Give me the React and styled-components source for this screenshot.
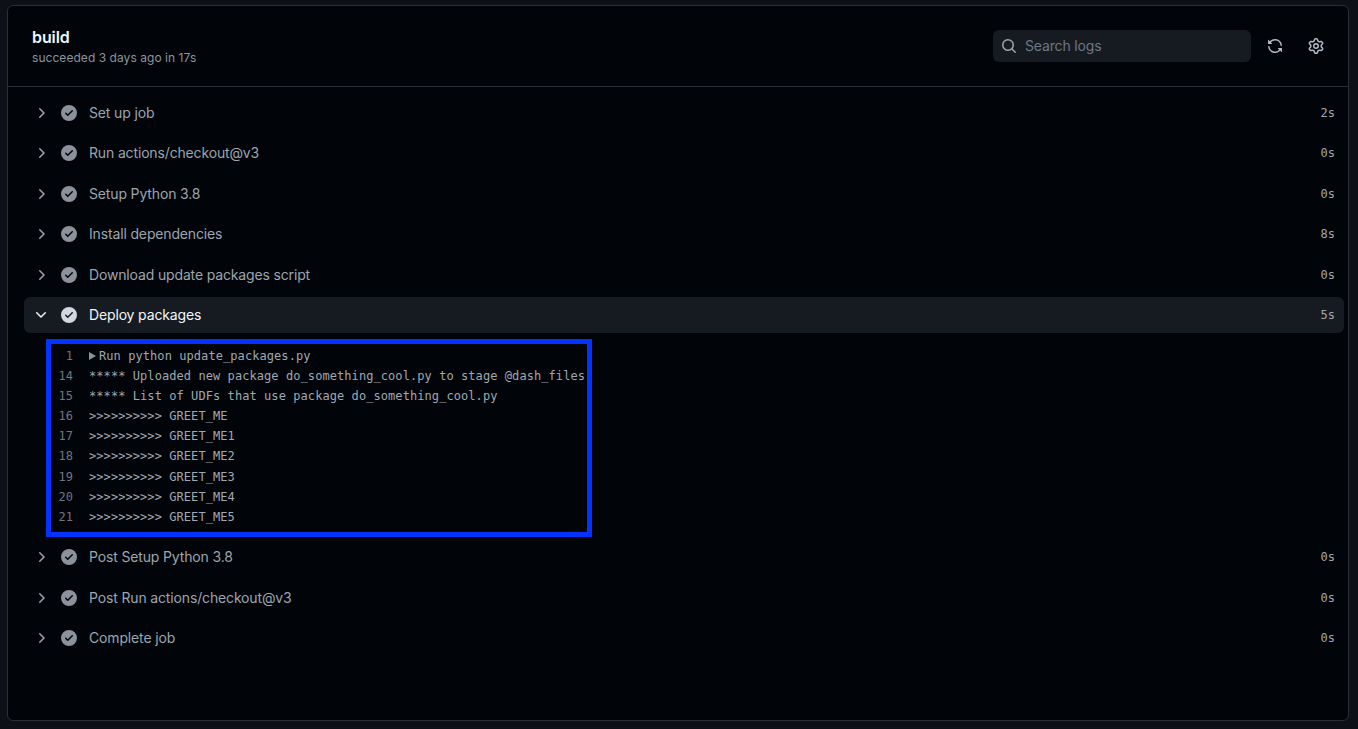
import React from 'react';
import styled, { createGlobalStyle } from 'styled-components';

const icons = {
  chevronRight:
    'M6.22 3.22a.75.75 0 0 1 1.06 0l4.25 4.25a.75.75 0 0 1 0 1.06l-4.25 4.25a.751.751 0 0 1-1.042-.018.751.751 0 0 1-.018-1.042L9.94 8 6.22 4.28a.75.75 0 0 1 0-1.06Z',
  chevronDown:
    'M12.78 5.22a.749.749 0 0 1 0 1.06l-4.25 4.25a.749.749 0 0 1-1.06 0L3.22 6.28a.749.749 0 1 1 1.06-1.06L8 8.939l3.72-3.719a.749.749 0 0 1 1.06 0Z',
  check:
    'M8 16A8 8 0 1 1 8 0a8 8 0 0 1 0 16Zm3.78-9.72a.751.751 0 0 0-.018-1.042.751.751 0 0 0-1.042-.018L6.75 9.19 5.28 7.72a.751.751 0 0 0-1.042.018.751.751 0 0 0-.018 1.042l2 2a.75.75 0 0 0 1.06 0Z',
  search:
    'M10.68 11.74a6 6 0 0 1-7.922-8.982 6 6 0 0 1 8.982 7.922l3.04 3.04a.749.749 0 0 1-.326 1.275.749.749 0 0 1-.734-.215ZM11.5 7a4.499 4.499 0 1 0-8.997 0A4.499 4.499 0 0 0 11.5 7Z',
  sync:
    'M1.705 8.005a.75.75 0 0 1 .834.656 5.5 5.5 0 0 0 9.592 2.97l-1.204-1.204a.25.25 0 0 1 .177-.427h3.646a.25.25 0 0 1 .25.25v3.646a.25.25 0 0 1-.427.177l-1.38-1.38A7.002 7.002 0 0 1 1.05 8.84a.75.75 0 0 1 .656-.834ZM8 2.5a5.487 5.487 0 0 0-4.131 1.869l1.204 1.204A.25.25 0 0 1 4.896 6H1.25A.25.25 0 0 1 1 5.75V2.104a.25.25 0 0 1 .427-.177l1.38 1.38A7.002 7.002 0 0 1 14.95 7.16a.75.75 0 0 1-1.49.178A5.5 5.5 0 0 0 8 2.5Z',
  gear:
    'M8 0a8.2 8.2 0 0 1 .701.031C9.444.095 9.99.645 10.16 1.29l.288 1.107c.018.066.079.158.212.224.231.114.454.243.668.386.123.082.233.09.299.071l1.103-.303c.644-.176 1.392.021 1.82.63.27.385.506.792.704 1.218.315.675.111 1.422-.364 1.891l-.814.806c-.049.048-.098.147-.088.294.016.257.016.515 0 .772-.01.147.038.246.088.294l.814.806c.475.469.679 1.216.364 1.891a7.977 7.977 0 0 1-.704 1.217c-.428.61-1.176.807-1.82.63l-1.102-.302c-.067-.019-.177-.011-.3.071a5.909 5.909 0 0 1-.668.386c-.133.066-.194.158-.211.224l-.29 1.106c-.168.646-.715 1.196-1.458 1.26a8.006 8.006 0 0 1-1.402 0c-.743-.064-1.289-.614-1.458-1.26l-.289-1.106c-.018-.066-.079-.158-.212-.224a5.738 5.738 0 0 1-.668-.386c-.123-.082-.233-.09-.299-.071l-1.103.303c-.644.176-1.392-.021-1.82-.63a8.12 8.12 0 0 1-.704-1.218c-.315-.675-.111-1.422.363-1.891l.815-.806c.05-.048.098-.147.088-.294a6.214 6.214 0 0 1 0-.772c.01-.147-.038-.246-.088-.294l-.815-.806C.635 6.045.431 5.298.746 4.623a7.92 7.92 0 0 1 .704-1.217c.428-.61 1.176-.807 1.82-.63l1.102.302c.067.019.177.011.3-.071.214-.143.437-.272.668-.386.133-.066.194-.158.211-.224l.29-1.106C6.009.645 6.556.095 7.299.03 7.53.01 7.764 0 8 0Zm-.571 1.525c-.036.003-.108.036-.137.146l-.289 1.105c-.147.561-.549.967-.998 1.189-.173.086-.34.183-.5.29-.417.278-.97.423-1.529.27l-1.103-.303c-.109-.03-.175.016-.195.045-.22.312-.412.644-.573.99-.014.031-.021.11.059.19l.815.806c.411.406.562.957.53 1.456a4.709 4.709 0 0 0 0 .582c.032.499-.119 1.05-.53 1.456l-.815.806c-.081.08-.073.159-.059.19.162.346.353.677.573.989.02.03.085.076.195.046l1.102-.303c.56-.153 1.113-.008 1.53.27.161.107.328.204.501.29.447.222.85.629.997 1.189l.289 1.105c.029.109.101.143.137.146a6.6 6.6 0 0 0 1.142 0c.036-.003.108-.036.137-.146l.289-1.105c.147-.561.549-.967.998-1.189.173-.086.34-.183.5-.29.417-.278.97-.423 1.529-.27l1.103.303c.109.029.175-.016.195-.045.22-.313.411-.644.573-.99.014-.031.021-.11-.059-.19l-.815-.806c-.411-.406-.562-.957-.53-1.456a4.709 4.709 0 0 0 0-.582c-.032-.499.119-1.05.53-1.456l.815-.806c.081-.08.073-.159.059-.19a6.464 6.464 0 0 0-.573-.989c-.02-.03-.085-.076-.195-.046l-1.102.303c-.56.153-1.113.008-1.53-.27a4.44 4.44 0 0 0-.501-.29c-.447-.222-.85-.629-.997-1.189l-.289-1.105c-.029-.11-.101-.143-.137-.146a6.6 6.6 0 0 0-1.142 0ZM11 8a3 3 0 1 1-6 0 3 3 0 0 1 6 0ZM9.5 8a1.5 1.5 0 1 0-3.001.001A1.5 1.5 0 0 0 9.5 8Z',
};

const stepsBefore = [
  { name: 'Set up job', time: '2s' },
  { name: 'Run actions/checkout@v3', time: '0s' },
  { name: 'Setup Python 3.8', time: '0s' },
  { name: 'Install dependencies', time: '8s' },
  { name: 'Download update packages script', time: '0s' },
];

const stepsAfter = [
  { name: 'Post Setup Python 3.8', time: '0s' },
  { name: 'Post Run actions/checkout@v3', time: '0s' },
  { name: 'Complete job', time: '0s' },
];

const logLines = [
  { no: 1, text: 'Run python update_packages.py', fold: true },
  { no: 14, text: '***** Uploaded new package do_something_cool.py to stage @dash_files' },
  { no: 15, text: '***** List of UDFs that use package do_something_cool.py' },
  { no: 16, text: '>>>>>>>>>> GREET_ME' },
  { no: 17, text: '>>>>>>>>>> GREET_ME1' },
  { no: 18, text: '>>>>>>>>>> GREET_ME2' },
  { no: 19, text: '>>>>>>>>>> GREET_ME3' },
  { no: 20, text: '>>>>>>>>>> GREET_ME4' },
  { no: 21, text: '>>>>>>>>>> GREET_ME5' },
];

const Icon = ({ name }) => (
  <svg width="16" height="16" viewBox="0 0 16 16" fill="currentColor">
    <path d={icons[name]} />
  </svg>
);

const Step = ({ name, time, open }) => (
  <StepRow $open={open}>
    <Chevron $open={open}>
      <Icon name={open ? 'chevronDown' : 'chevronRight'} />
    </Chevron>
    <StatusIcon $open={open}>
      <Icon name="check" />
    </StatusIcon>
    <StepName>{name}</StepName>
    <Duration>{time}</Duration>
  </StepRow>
);

const App = () => (
  <>
    <GlobalStyle />
    <Panel>
      <Header>
        <TitleBlock>
          <Title>build</Title>
          <Subtitle>succeeded 3 days ago in 17s</Subtitle>
        </TitleBlock>
        <SearchBox>
          <Icon name="search" />
          <SearchInput placeholder="Search logs" />
        </SearchBox>
        <IconButton>
          <Icon name="sync" />
        </IconButton>
        <IconButton>
          <Icon name="gear" />
        </IconButton>
      </Header>

      <Steps>
        {stepsBefore.map(step => (
          <Step key={step.name} {...step} />
        ))}
        <Step name="Deploy packages" time="5s" open />
        <LogBox>
          {logLines.map(line => (
            <LogLine key={line.no}>
              <LineNumber>{line.no}</LineNumber>
              <LineText>
                {line.fold && (
                  <FoldMark viewBox="0 0 7 8">
                    <polygon points="0,0 7,4 0,8" fill="currentColor" />
                  </FoldMark>
                )}
                {line.text}
              </LineText>
            </LogLine>
          ))}
        </LogBox>
        {stepsAfter.map(step => (
          <Step key={step.name} {...step} />
        ))}
      </Steps>
    </Panel>
  </>
);

export default App;

const GlobalStyle = createGlobalStyle`
  html, body {
    margin: 0;
    height: 100%;
    overflow: hidden;
    background: #0d1117;
  }
  body {
    padding: 5px 9px 0 7px;
    box-sizing: border-box;
    font-family: Inter, "Liberation Sans", sans-serif;
  }
`;

const Panel = styled.div`
  height: 716px;
  box-sizing: border-box;
  background: #010409;
  border: 1px solid #2b3038;
  border-radius: 6px;
`;

const Header = styled.header`
  height: 81px;
  box-sizing: border-box;
  display: flex;
  align-items: center;
  padding: 0 16px 0 24px;
  border-bottom: 1px solid #2b3038;
`;

const TitleBlock = styled.div`
  flex: 1;
  display: flex;
  flex-direction: column;
  gap: 3px;
  padding-top: 1px;
`;

const Title = styled.div`
  color: #f0f6fc;
  font-size: 16px;
  font-weight: 600;
  line-height: 20px;
  letter-spacing: -0.1px;
`;

const Subtitle = styled.div`
  color: #8b949e;
  font-size: 12px;
  line-height: 16px;
  letter-spacing: 0.05px;
`;

const SearchBox = styled.label`
  width: 258px;
  height: 32px;
  box-sizing: border-box;
  display: flex;
  align-items: center;
  gap: 8px;
  padding: 0 8px;
  margin-right: 8px;
  background: #161b22;
  border-radius: 6px;
  color: #9da5ae;
`;

const SearchInput = styled.input`
  flex: 1;
  min-width: 0;
  padding: 0 0 2px;
  border: 0;
  outline: none;
  background: transparent;
  color: #c9d1d9;
  font-family: inherit;
  font-size: 14px;
  letter-spacing: -0.15px;

  &::placeholder {
    color: #6e7681;
    opacity: 1;
  }
`;

const IconButton = styled.button`
  width: 32px;
  height: 32px;
  padding: 0;
  display: flex;
  align-items: center;
  justify-content: center;
  border: 0;
  background: transparent;
  color: #b1bac4;

  & + & {
    margin-left: 9px;
  }
`;

const Steps = styled.div`
  display: flex;
  flex-direction: column;
  padding: 8px 4px 0 16px;
`;

const StepRow = styled.div`
  height: 36px;
  flex: none;
  display: flex;
  align-items: center;
  margin-bottom: 4.4px;
  padding: 0 9px 0 8.5px;
  border-radius: 6px;
  background: ${p => (p.$open ? '#161b22' : 'transparent')};
  color: ${p => (p.$open ? '#f0f6fc' : '#9da5ae')};
`;

const Chevron = styled.span`
  width: 16px;
  height: 16px;
  display: flex;
  color: ${p => (p.$open ? '#f0f6fc' : '#9da5ae')};
`;

const StatusIcon = styled.span`
  width: 16px;
  height: 16px;
  display: flex;
  margin-left: 12.5px;
  color: ${p => (p.$open ? '#d3d8de' : '#8b929c')};
`;

const StepName = styled.span`
  flex: 1;
  margin-left: 12px;
  font-size: 14px;
  line-height: 20px;
  letter-spacing: -0.15px;
`;

const Duration = styled.span`
  font-family: "DejaVu Sans Mono", "Liberation Mono", monospace;
  font-size: 12px;
  color: #a0a8b0;
`;

const LogBox = styled.div`
  width: 546px;
  box-sizing: border-box;
  margin: 1.6px 0 2.1px 22px;
  padding: 2px 0 5.5px;
  border: 5px solid #0433ff;
  display: flex;
  flex-direction: column;
`;

const LogLine = styled.div`
  height: 20.1px;
  display: flex;
  align-items: center;
  font-family: "DejaVu Sans Mono", "Liberation Mono", monospace;
  font-size: 12px;
  letter-spacing: 0.07px;
  white-space: pre;
`;

const LineNumber = styled.span`
  width: 22px;
  text-align: right;
  color: #6e7681;
`;

const LineText = styled.span`
  margin-left: 16px;
  display: flex;
  align-items: center;
  color: #a0a8b0;
`;

const FoldMark = styled.svg`
  width: 7px;
  height: 8px;
  margin-right: 3px;
  color: #8b929c;
`;
